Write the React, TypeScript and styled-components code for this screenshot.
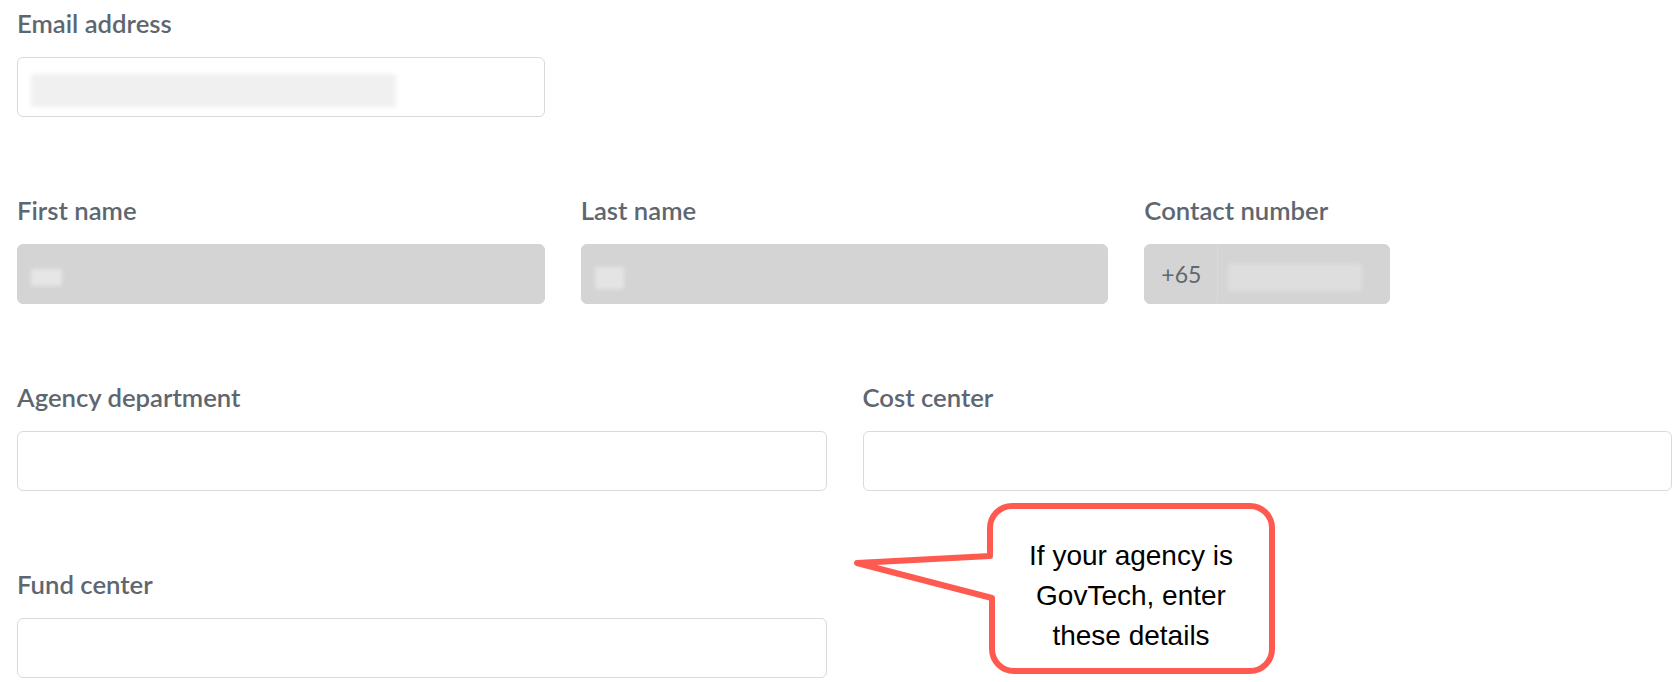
import styled, { createGlobalStyle } from "styled-components";

const GlobalStyle = createGlobalStyle`
  body {
    margin: 0;
    background: #ffffff;
    font-family: Lato, "Liberation Sans", sans-serif;
  }
`;

const Page = styled.div`
  position: relative;
  display: flex;
  flex-direction: column;
  gap: 75px;
  padding: 5px 8px 0 17px;
`;

const Row = styled.div<{ $cols: number }>`
  display: grid;
  grid-template-columns: repeat(${(p) => p.$cols}, 1fr);
  column-gap: 36px;
`;

const Field = styled.div`
  display: flex;
  flex-direction: column;
  gap: 16px;
  min-width: 0;
`;

const Label = styled.label`
  font-size: 25.7px;
  line-height: 36px;
  font-weight: 600;
  color: #5e6770;
`;

const Input = styled.div<{ $disabled?: boolean }>`
  box-sizing: border-box;
  height: 60px;
  display: flex;
  align-items: center;
  padding: 0 13px;
  border-radius: 6px;
  border: 1px solid ${(p) => (p.$disabled ? "#d3d3d3" : "#d9dadb")};
  background: ${(p) => (p.$disabled ? "#d4d4d4" : "#ffffff")};
`;

const PhoneInput = styled.div`
  box-sizing: border-box;
  width: 246px;
  height: 60px;
  display: flex;
  border-radius: 6px;
  border: 1px solid #d3d3d3;
  background: #d4d4d4;
`;

const Prefix = styled.span`
  width: 72px;
  display: flex;
  align-items: center;
  justify-content: center;
  border-right: 1px solid #dadada;
  font-size: 23px;
  color: #5f6770;
`;

const PhoneValue = styled.div`
  flex: 1;
  display: flex;
  align-items: center;
  padding-left: 10px;
`;

// blurred-out personal values
const Redacted = styled.div<{ $w: number; $h: number; $tone: string }>`
  width: ${(p) => p.$w}px;
  height: ${(p) => p.$h}px;
  margin-top: 7px;
  background: ${(p) => p.$tone};
  filter: blur(2px);
`;

const Callout = styled.div`
  position: absolute;
  left: 850px;
  top: 495px;
  width: 430px;
  height: 185px;
`;

const CalloutText = styled.p`
  position: absolute;
  left: 140px;
  top: 41px;
  width: 282px;
  margin: 0;
  text-align: center;
  font-family: "Liberation Sans", Arial, sans-serif;
  font-size: 28px;
  line-height: 40px;
  color: #000000;
`;

export default function App() {
  return (
    <>
      <GlobalStyle />
      <Page>
        <Row $cols={3}>
          <Field>
            <Label>Email address</Label>
            <Input>
              <Redacted $w={365} $h={33} $tone="#f0f0f0" />
            </Input>
          </Field>
        </Row>

        <Row $cols={3}>
          <Field>
            <Label>First name</Label>
            <Input $disabled>
              <Redacted $w={31} $h={17} $tone="#e6e6e6" />
            </Input>
          </Field>
          <Field>
            <Label>Last name</Label>
            <Input $disabled>
              <Redacted $w={29} $h={22} $tone="#e4e4e4" />
            </Input>
          </Field>
          <Field>
            <Label>Contact number</Label>
            <PhoneInput>
              <Prefix>+65</Prefix>
              <PhoneValue>
                <Redacted $w={134} $h={27} $tone="#dedede" />
              </PhoneValue>
            </PhoneInput>
          </Field>
        </Row>

        <Row $cols={2}>
          <Field>
            <Label>Agency department</Label>
            <Input />
          </Field>
          <Field>
            <Label>Cost center</Label>
            <Input />
          </Field>
        </Row>

        <Row $cols={2}>
          <Field>
            <Label>Fund center</Label>
            <Input />
          </Field>
        </Row>

        <Callout>
          <svg width="430" height="185" viewBox="0 0 430 185">
            <path
              d="M162 11 H400 A22 22 0 0 1 422 33 V154 A22 22 0 0 1 400 176 H164 A22 22 0 0 1 142 154 V103 L7 68 L140 61 V33 A22 22 0 0 1 162 11 Z"
              fill="#ffffff"
              stroke="#fe5a4f"
              strokeWidth="6"
              strokeLinejoin="round"
            />
          </svg>
          <CalloutText>
            If your agency is
            <br />
            GovTech, enter
            <br />
            these details
          </CalloutText>
        </Callout>
      </Page>
    </>
  );
}
